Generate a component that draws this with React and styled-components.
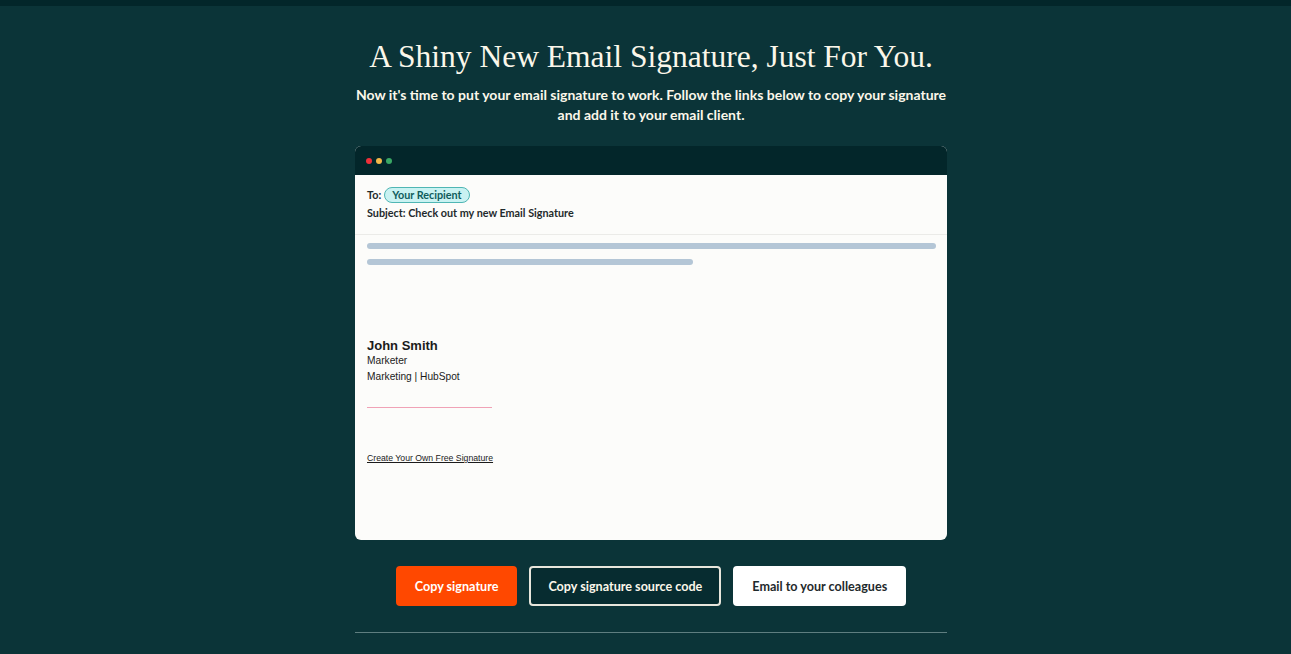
import React from "react";
import styled, { createGlobalStyle } from "styled-components";

const Global = createGlobalStyle`
  html, body { margin: 0; padding: 0; }
  body {
    background: #0b3438;
    font-family: Lato, "Noto Sans", "Liberation Sans", sans-serif;
    -webkit-font-smoothing: antialiased;
  }
`;

const TopBar = styled.div`
  height: 6px;
  background: #03262a;
`;

const Page = styled.main`
  display: flex;
  flex-direction: column;
  align-items: center;
  padding: 33px 0 0 11px;
  min-height: 648px;
  box-sizing: border-box;
`;

const Title = styled.h1`
  margin: 0;
  font-family: "Liberation Serif", "DejaVu Serif", serif;
  font-weight: 400;
  font-size: 31.5px;
  line-height: 36px;
  color: #fbf7ea;
  text-align: center;
`;

const Lead = styled.p`
  margin: 10px 0 0;
  width: 600px;
  font-size: 14px;
  line-height: 20px;
  font-weight: 700;
  color: #fbf7ea;
  text-align: center;
`;

const Window = styled.section`
  margin-top: 21px;
  width: 592px;
  border-radius: 6px;
  overflow: hidden;
  background: #fcfcfa;
  display: flex;
  flex-direction: column;
`;

const WindowBar = styled.div`
  height: 29px;
  background: #03262a;
  display: flex;
  align-items: center;
  gap: 4px;
  padding-left: 11px;
`;

const Dot = styled.span`
  width: 6px;
  height: 6px;
  border-radius: 50%;
  background: ${(p) => p.$color};
`;

const Header = styled.div`
  padding: 12px 12px 13px;
  border-bottom: 1px solid #ebebe8;
  display: flex;
  flex-direction: column;
  gap: 2px;
`;

const HeaderLine = styled.div`
  display: flex;
  align-items: center;
  gap: 3px;
  font-size: 10.8px;
  line-height: 16px;
  font-weight: 700;
  color: #1f2a2c;
`;

const Pill = styled.span`
  display: inline-flex;
  align-items: center;
  height: 14px;
  padding: 0 7px;
  border-radius: 9px;
  border: 1px solid #4fb6b4;
  background: #c9f2f2;
  color: #0f5c5c;
  font-size: 10.8px;
  font-weight: 700;
`;

const Body = styled.div`
  padding: 8px 11px 0 12px;
  height: 297px;
  display: flex;
  flex-direction: column;
`;

const Placeholder = styled.div`
  height: 6px;
  border-radius: 3px;
  background: #b4c6d6;
  width: ${(p) => p.$w};
  margin-bottom: 10px;
`;

const Signature = styled.div`
  margin-top: 63px;
  font-family: "Liberation Sans", Arial, sans-serif;
  color: #1b1b1b;
  display: flex;
  flex-direction: column;
  align-items: flex-start;
`;

const Name = styled.div`
  font-size: 13px;
  font-weight: 700;
  line-height: 15px;
`;

const Role = styled.div`
  font-size: 10.2px;
  line-height: 16px;
`;

const Rule = styled.div`
  margin-top: 22px;
  width: 125px;
  height: 0;
  border-top: 1px solid #f0a2b6;
`;

const CreditLink = styled.a`
  margin-top: 45px;
  font-size: 8.7px;
  color: #1b1b1b;
  text-decoration: underline;
`;

const Actions = styled.div`
  margin-top: 26px;
  display: flex;
  gap: 12px;
`;

const Button = styled.button`
  height: 40px;
  padding: 0 ${(p) => p.$pad}px;
  border-radius: 4px;
  font-family: Lato, "Noto Sans", "Liberation Sans", sans-serif;
  font-size: 12.6px;
  font-weight: 700;
  cursor: pointer;
  box-sizing: border-box;
  border: 2px solid ${(p) => p.$border};
  background: ${(p) => p.$bg};
  color: ${(p) => p.$fg};
`;

const Divider = styled.div`
  margin-top: 26px;
  width: 592px;
  height: 0;
  border-top: 1px solid #5f7e80;
`;

export default function App() {
  return (
    <>
      <Global />
      <TopBar />
      <Page>
        <Title>A Shiny New Email Signature, Just For You.</Title>
        <Lead>
          Now it's time to put your email signature to work. Follow the links below to copy your signature
          and add it to your email client.
        </Lead>
        <Window>
          <WindowBar>
            <Dot $color="#f0303a" />
            <Dot $color="#f5b94a" />
            <Dot $color="#3aa865" />
          </WindowBar>
          <Header>
            <HeaderLine>
              To: <Pill>Your Recipient</Pill>
            </HeaderLine>
            <HeaderLine>Subject: Check out my new Email Signature</HeaderLine>
          </Header>
          <Body>
            <Placeholder $w="569px" />
            <Placeholder $w="326px" />
            <Signature>
              <Name>John Smith</Name>
              <Role>Marketer</Role>
              <Role>Marketing | HubSpot</Role>
              <Rule />
              <CreditLink href="#">Create Your Own Free Signature</CreditLink>
            </Signature>
          </Body>
        </Window>
        <Actions>
          <Button $pad={17} $bg="#ff4800" $fg="#ffffff" $border="#ff4800">Copy signature</Button>
          <Button $pad={17} $bg="#072c30" $fg="#fbf7ea" $border="#e8e6dc">Copy signature source code</Button>
          <Button $pad={17} $bg="#ffffff" $fg="#1f2a2c" $border="#ffffff">Email to your colleagues</Button>
        </Actions>
        <Divider />
      </Page>
    </>
  );
}
